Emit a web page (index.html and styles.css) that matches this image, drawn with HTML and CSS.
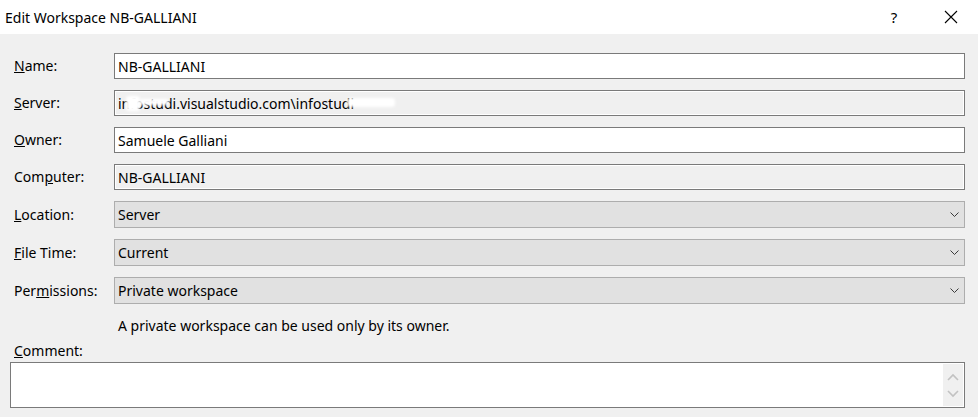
FILE: index.html
```html
<!DOCTYPE html>
<html>
<head>
<meta charset="utf-8">
<link rel="stylesheet" href="styles.css">
</head>
<body>
<div class="dialog">
  <div class="titlebar">
    <span class="title">Edit Workspace NB-GALLIANI</span>
    <div class="title-buttons">
      <span class="help">?</span>
      <svg class="close" width="14" height="14" viewBox="0 0 14 14"><path d="M1 1 L13 13 M13 1 L1 13" stroke="#000" stroke-width="1.1" fill="none"/></svg>
    </div>
  </div>
  <div class="body">
    <div class="form">
      <label class="lbl"><u>N</u>ame:</label>
      <div class="field text">NB-GALLIANI</div>

      <label class="lbl"><u>S</u>erver:</label>
      <div class="field readonly server">infostudi.visualstudio.com\infostudi<span class="mask m1"></span><span class="mask m2"></span><span class="mask m3"></span></div>

      <label class="lbl"><u>O</u>wner:</label>
      <div class="field text">Samuele Galliani</div>

      <label class="lbl">Com<u>p</u>uter:</label>
      <div class="field readonly">NB-GALLIANI</div>

      <label class="lbl"><u>L</u>ocation:</label>
      <div class="field combo">Server<svg class="chev" width="9" height="5" viewBox="0 0 9 5"><path d="M0.5 0.5 L4.5 4.5 L8.5 0.5" stroke="#3a3a3a" stroke-width="1" fill="none"/></svg></div>

      <label class="lbl"><u>F</u>ile Time:</label>
      <div class="field combo">Current<svg class="chev" width="9" height="5" viewBox="0 0 9 5"><path d="M0.5 0.5 L4.5 4.5 L8.5 0.5" stroke="#3a3a3a" stroke-width="1" fill="none"/></svg></div>

      <label class="lbl">Per<u>m</u>issions:</label>
      <div class="field combo">Private workspace<svg class="chev" width="9" height="5" viewBox="0 0 9 5"><path d="M0.5 0.5 L4.5 4.5 L8.5 0.5" stroke="#3a3a3a" stroke-width="1" fill="none"/></svg></div>
    </div>
    <div class="hint">A private workspace can be used only by its owner.</div>
    <div class="comment-lbl"><u>C</u>omment:</div>
    <div class="comment">
      <div class="scroll">
        <svg width="12" height="8" viewBox="0 0 12 8"><path d="M1 7 L6 2 L11 7" stroke="#c2c2c2" stroke-width="1.6" fill="none"/></svg>
        <svg width="12" height="8" viewBox="0 0 12 8"><path d="M1 1 L6 6 L11 1" stroke="#c2c2c2" stroke-width="1.6" fill="none"/></svg>
      </div>
    </div>
  </div>
</div>
</body>
</html>
```
FILE: styles.css
```css
* { box-sizing: border-box; }
html, body { margin: 0; padding: 0; }
body {
  font-family: "Noto Sans", "Open Sans", sans-serif;
  font-size: 14px;
  color: #000;
  background: #f0f0f0;
  width: 978px;
  height: 417px;
  overflow: hidden;
}
.dialog { display: flex; flex-direction: column; height: 417px; }
.titlebar {
  height: 34px;
  background: #fff;
  display: flex;
  align-items: center;
  justify-content: space-between;
  padding: 0 0 0 5px;
}
.title { font-size: 14px; }
.title-buttons { display: flex; align-items: center; }
.help { font-size: 15px; width: 20px; text-align: center; margin-right: 40px; }
.close { margin-right: 20px; }
.body {
  flex: 1;
  background: #f0f0f0;
  padding: 19px 13px 0 14px;
}
.form {
  display: grid;
  grid-template-columns: 100px 1fr;
  grid-template-rows: 26px 26px 26px 26px 27px 27px 27px;
  row-gap: 11px;
  align-items: center;
}
.lbl { line-height: 26px; }
.field {
  height: 100%;
  border: 1px solid #7a7a7a;
  padding: 0 3px;
  display: flex;
  align-items: center;
  white-space: nowrap;
  overflow: hidden;
  position: relative;
}
.text { background: #fff; }
.readonly { background: #f0f0f0; box-shadow: inset 0 0 0 1px #fff; }
.combo {
  background: #e1e1e1;
  border-color: #adadad;
  justify-content: space-between;
  padding-right: 5px;
}
.chev { flex: none; }
.mask {
  position: absolute;
  background: #fff;
  filter: blur(1.5px);
  border-radius: 3px;
}
.m1 { left: 11px; top: 5px; width: 14px; height: 15px; }
.m2 { left: 24px; top: 8px; width: 30px; height: 6px; }
.m3 { left: 232px; top: 7px; width: 48px; height: 9px; }
.hint {
  margin: 12px 0 0 104px;
  line-height: 19px;
}
.comment-lbl {
  margin: 6px 0 0 0;
  line-height: 19px;
}
.comment {
  margin: 2px 0 0 -4px;
  height: 46px;
  background: #fff;
  border: 1px solid #7a7a7a;
  display: flex;
  justify-content: flex-end;
  padding: 1px;
}
.scroll {
  width: 20px;
  background: #f0f0f0;
  display: flex;
  flex-direction: column;
  align-items: center;
  justify-content: space-around;
  padding: 4px 0;
}
```
